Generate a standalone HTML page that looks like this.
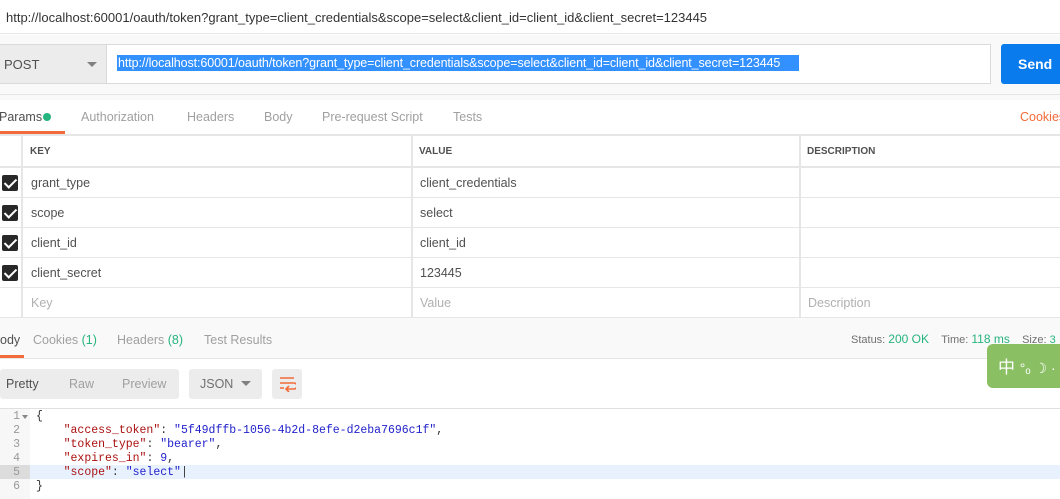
<!DOCTYPE html>
<html><head><style>
*{margin:0;padding:0;box-sizing:border-box}
body{width:1060px;height:499px;overflow:hidden;background:#fff;font-family:"Liberation Sans",sans-serif;font-size:12.5px;color:#505050;position:relative}
.a{position:absolute}
.mono{font-family:"Liberation Mono",monospace;font-size:11.5px}
.cb{position:absolute;left:2px;width:16px;height:16px;background:#282828;border-radius:2px}
.cb:after{content:"";position:absolute;left:5px;top:1px;width:5px;height:10px;border:solid #fff;border-width:0 2px 2px 0;transform:rotate(45deg)}
.row{position:absolute;left:0;width:1060px;height:30px;border-bottom:1px solid #e6e6e6;background:#fff}
.row span{position:absolute;top:8px}
.vl{position:absolute;top:136px;height:182px;width:2px;background:#e6e6e6}
</style></head><body>
<div class="a" style="left:0;top:0;width:1060px;height:34px;background:#fff;border-bottom:1px solid #e6e6e6"></div>
<div class="a" style="left:6px;top:10px;font-size:13px;color:#333">http://localhost:60001/oauth/token?grant_type=client_credentials&amp;scope=select&amp;client_id=client_id&amp;client_secret=123445</div>
<div class="a" style="left:0;top:35px;width:1060px;height:65px;background:#f9f9f9"></div>
<div class="a" style="left:0;top:44px;width:107px;height:40px;background:#ececec;border:1px solid #dadada;border-left:none"></div>
<div class="a" style="left:4px;top:57px;color:#505050;font-size:13px">POST</div>
<div class="a" style="left:87px;top:62px;border:5px solid transparent;border-top:5px solid #808080"></div>
<div class="a" style="left:106px;top:44px;width:885px;height:40px;background:#fff;border:1px solid #dadada"></div>
<div class="a" style="left:117px;top:55px;height:16px;width:682px;background:#3390ff"></div>
<div class="a" style="left:118px;top:56px;color:#fff;font-size:12.5px;letter-spacing:-0.1px">http://localhost:60001/oauth/token?grant_type=client_credentials&amp;scope=select&amp;client_id=client_id&amp;client_secret=123445</div>
<div class="a" style="left:1001px;top:44px;width:70px;height:40px;background:#097bed;border-radius:3px"></div>
<div class="a" style="left:1018px;top:56px;color:#fff;font-weight:bold;font-size:14px">Send</div>
<div class="a" style="left:0;top:94px;width:1060px;height:1px;background:#e6e6e6"></div>
<div class="a" style="left:-1px;top:110px;color:#505050">Params</div>
<div class="a" style="left:43px;top:113px;width:8px;height:8px;border-radius:50%;background:#26b47f"></div>
<div class="a" style="left:0;top:131px;width:65px;height:3px;background:#f26b3a"></div>
<div class="a" style="left:81px;top:110px;color:#a0a0a0">Authorization</div>
<div class="a" style="left:187px;top:110px;color:#a0a0a0">Headers</div>
<div class="a" style="left:264px;top:110px;color:#a0a0a0">Body</div>
<div class="a" style="left:322px;top:110px;color:#a0a0a0">Pre-request Script</div>
<div class="a" style="left:453px;top:110px;color:#a0a0a0">Tests</div>
<div class="a" style="left:1020px;top:110px;color:#f26b3a">Cookies</div>
<div class="a" style="left:0;top:134px;width:1060px;height:2px;background:#e6e6e6"></div>
<div class="row" style="top:136px;height:32px;border-bottom:2px solid #e6e6e6"><span style="left:30px;top:10px;font-size:10px;font-weight:bold;color:#505050">KEY</span><span style="left:419px;top:10px;font-size:10px;font-weight:bold;color:#505050">VALUE</span><span style="left:807px;top:10px;font-size:10px;font-weight:bold;color:#505050">DESCRIPTION</span></div>
<div class="row" style="top:168px"><div class="cb" style="top:7px"></div><span style="left:31px">grant_type</span><span style="left:420px">client_credentials</span></div>
<div class="row" style="top:198px"><div class="cb" style="top:7px"></div><span style="left:31px">scope</span><span style="left:420px">select</span></div>
<div class="row" style="top:228px"><div class="cb" style="top:7px"></div><span style="left:31px">client_id</span><span style="left:420px">client_id</span></div>
<div class="row" style="top:258px"><div class="cb" style="top:7px"></div><span style="left:31px">client_secret</span><span style="left:420px">123445</span></div>
<div class="row" style="top:288px"><span style="left:31px;color:#b0b0b0">Key</span><span style="left:420px;color:#b0b0b0">Value</span><span style="left:808px;color:#b0b0b0">Description</span></div>
<div class="vl" style="left:21px"></div><div class="vl" style="left:411px"></div><div class="vl" style="left:799px"></div>
<div class="a" style="left:0;top:318px;width:1060px;height:41px;background:#f9f9f9;border-bottom:1px solid #e6e6e6"></div>
<div class="a" style="left:0;top:333px;color:#505050">ody</div>
<div class="a" style="left:0;top:355px;width:24px;height:3px;background:#f26b3a"></div>
<div class="a" style="left:33px;top:333px;color:#a0a0a0">Cookies <span style="color:#26b47f">(1)</span></div>
<div class="a" style="left:117px;top:333px;color:#a0a0a0">Headers <span style="color:#26b47f">(8)</span></div>
<div class="a" style="left:204px;top:333px;color:#a0a0a0">Test Results</div>
<div class="a" style="left:851px;top:332px;font-size:11px;color:#707070">Status: <span style="color:#26b47f;font-size:12px">200 OK</span>&nbsp;&nbsp;&nbsp;&nbsp;Time: <span style="color:#26b47f;font-size:12px">118 ms</span>&nbsp;&nbsp;&nbsp;&nbsp;Size: <span style="color:#26b47f">3</span></div>
<div class="a" style="left:987px;top:344px;width:80px;height:44px;background:#8bbf64;border-radius:6px;color:#fff;font-size:17px;padding:9px 0 0 11px;font-family:'Liberation Sans','Noto Sans CJK SC',sans-serif">中 <span style="font-size:14px">°ₒ ☽ ·</span></div>
<div class="a" style="left:0;top:369px;width:179px;height:30px;background:#ececec;border-radius:3px"></div>
<div class="a" style="left:6px;top:377px;color:#505050">Pretty</div>
<div class="a" style="left:69px;top:377px;color:#a0a0a0">Raw</div>
<div class="a" style="left:122px;top:377px;color:#a0a0a0">Preview</div>
<div class="a" style="left:189px;top:369px;width:73px;height:30px;background:#ececec;border-radius:3px"></div>
<div class="a" style="left:200px;top:377px;color:#707070">JSON</div>
<div class="a" style="left:241px;top:381px;border:5px solid transparent;border-top:5px solid #808080"></div>
<div class="a" style="left:272px;top:369px;width:30px;height:30px;background:#ececec;border-radius:3px"></div>
<svg class="a" style="left:278px;top:376px" width="18" height="16"><path d="M2 2h14M2 7h14a3 3 0 0 1 0 6H9M2 12h4" stroke="#f26b3a" stroke-width="1.6" fill="none"/><path d="M11 10l-3 3 3 3" stroke="#f26b3a" stroke-width="1.6" fill="none"/></svg>
<div class="a" style="left:0;top:408px;width:1060px;height:1px;background:#e0e0e0"></div>
<div class="a" style="left:0;top:409px;width:30px;height:90px;background:#f7f7f7"></div>
<div class="a" style="left:30px;top:465px;width:1030px;height:14px;background:#e8f2fe"></div>
<div class="a" style="left:0;top:465px;width:30px;height:14px;background:#dcdcdc"></div>
<div class="a mono" style="left:0;top:410px;line-height:14px;color:#999;width:20px;text-align:right">1<br>2<br>3<br>4<br>5<br>6</div>
<div class="a" style="left:22px;top:415px;border:3px solid transparent;border-top:4px solid #888"></div>
<div class="a mono" style="left:36px;top:410px;line-height:14px;color:#333;white-space:pre">{
    <span style="color:#a11">"access_token"</span>: <span style="color:#22c">"5f49dffb-1056-4b2d-8efe-d2eba7696c1f"</span>,
    <span style="color:#a11">"token_type"</span>: <span style="color:#22c">"bearer"</span>,
    <span style="color:#a11">"expires_in"</span>: <span style="color:#22c">9</span>,
    <span style="color:#a11">"scope"</span>: <span style="color:#22c">"select"</span>|
}</div>
</body></html>
